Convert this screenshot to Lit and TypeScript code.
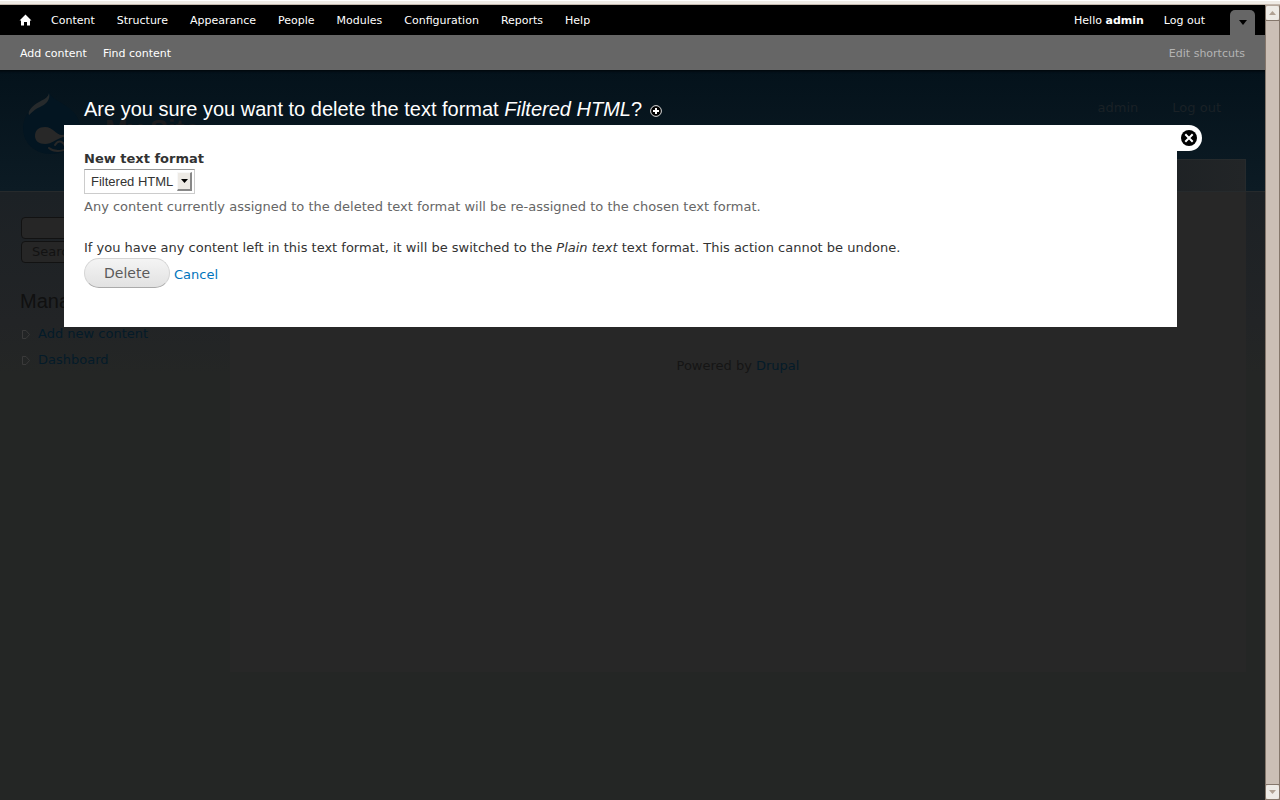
import { LitElement, html, css, svg } from "lit";
import { customElement } from "lit/decorators.js";

const MENU = ["Content", "Structure", "Appearance", "People", "Modules", "Configuration", "Reports", "Help"];

@customElement("admin-toolbar")
class AdminToolbar extends LitElement {
  static styles = css`
    :host { display: block; font: 11px/20px "DejaVu Sans", sans-serif; }
    a { color: #fff; text-decoration: none; }
    .bar { display: flex; height: 30px; box-sizing: border-box; background: #000; align-items: center; padding: 2px 0 0 19px; color: #fff; }
    .menu { display: flex; gap: 22px; align-items: center; flex: 1; }
    .home { display: flex; margin-right: -3px; padding-bottom: 2px; }
    .user { display: flex; gap: 20px; margin-right: 25px; }
    .toggle {
      align-self: flex-end; width: 25px; height: 25px; margin-right: 10px; padding: 0; border: 0;
      border-radius: 5px 5px 0 0; background: #666; display: flex; align-items: center; justify-content: center;
    }
    .shortcuts {
      display: flex; height: 35px; box-sizing: border-box; background: #666; align-items: center;
      padding: 2px 20px 0; gap: 16px;
    }
    .edit { margin-left: auto; color: #b4b4b4; }
  `;
  render() {
    return html`
      <div class="bar">
        <nav class="menu" aria-label="Administration">
          <a class="home" href="#" aria-label="Home"><svg width="13" height="12" viewBox="0 0 13 12"><path fill="#fff" d="M6.5 .5 12.5 6.5H11V11.5H8V8H5V11.5H2V6.5H.5Z"/></svg></a>
          ${MENU.map((m) => html`<a href="#">${m}</a>`)}
        </nav>
        <div class="user"><a href="#">Hello <b>admin</b></a><a href="#">Log out</a></div>
        <button class="toggle" aria-label="Toggle shortcuts"><svg width="8" height="5"><path d="M0 0H8L4 5Z"/></svg></button>
      </div>
      <div class="shortcuts">
        <a href="#">Add content</a><a href="#">Find content</a>
        <a class="edit" href="#">Edit shortcuts</a>
      </div>`;
  }
}

@customElement("site-page")
class SitePage extends LitElement {
  static styles = css`
    :host { display: block; font: 13px/20px "DejaVu Sans", sans-serif; color: #151515; }
    a { color: #041b29; text-decoration: none; }
    .header {
      height: 121px; background: linear-gradient(#04121b, #0c1b24); display: grid;
      grid-template-columns: 1fr auto; grid-template-rows: 89px 32px; box-shadow: inset 0 4px 3px -3px #010508;
    }
    .brand { display: flex; padding: 21px 0 0 22px; gap: 24px; }
    .name { font: bold 27px/30px "Liberation Sans", sans-serif; color: #1b1c1f; padding-top: 24px; }
    .account { display: flex; gap: 34px; padding: 28px 44px 0 0; }
    .account a { color: #1a2126; }
    .tab {
      grid-column: 1 / 3; margin: 0 19px 0 230px; border: 1px solid #262a2c; border-bottom: 0;
      background: linear-gradient(90deg, #1d2124 90%, #222527); box-sizing: border-box;
    }
    .body {
      display: grid; grid-template-columns: 230px 1fr 19px; min-height: 481px;
      border-top: 1px solid #262a2c; box-sizing: border-box;
      background: linear-gradient(#1c2125, #222426 130px, #242625 180px);
    }
    .side { padding: 25px 20px 0; }
    .search { display: flex; flex-direction: column; align-items: flex-start; gap: 2px; padding-left: 1px; }
    .search input, .search button {
      box-sizing: border-box; height: 22px; border: 1px solid #121212; border-radius: 4px;
      background: #262626; color: #121212; font: 13px/18px "DejaVu Sans", sans-serif;
    }
    .search input { width: 150px; }
    .search button { padding: 0 10px; }
    h2 { font: 20px/24px "Liberation Sans", sans-serif; margin: 26px 0 11px; color: #101010; }
    ul { list-style: none; margin: 0; padding: 0; }
    li { display: flex; align-items: center; gap: 8px; margin-bottom: 6px; padding-left: 2px; }
    .main { background: #272727; text-align: center; padding-top: 164px; }
  `;
  render() {
    const arrow = () => svg`<svg width="8" height="9"><path d="M.5 .5H4L7.5 4.5 4 8.5H.5Z" fill="none" stroke="#3a3a3a"/></svg>`;
    return html`
      <div class="header">
        <div class="brand">
          <svg width="59" height="65" viewBox="0 0 59 65">
            <path fill="#031521" d="M27 0C28 8 40 11 47 17C54 23 58 29 58 37C58 53 45 63 29 63C12 63 1 51 1 37C1 28 6 20 13 15C20 10 26 7 27 0Z"/>
            <path fill="#262a2c" d="M27 2C29 9 23 14 18 16C12 18 9 23 7 24C5 20 11 14 17 11C22 8 26 7 27 2Z"/>
            <path fill="#282828" d="M23 36C31 36 34 44 40 44C46 44 49 39 54 42V52C49 56 46 47 41 46C34 48 30 53 23 53C17 53 13 50 13 45C13 39 17 36 23 36Z"/>
            <path fill="none" stroke="#282828" stroke-width="2" stroke-linecap="round" d="M33 54C37 47 42 52 43 55M27 57C33 62 43 60 48 56"/>
          </svg>
          <div class="name">My Site</div>
        </div>
        <div class="account"><a href="#">admin</a><a href="#">Log out</a></div>
        <div class="tab"></div>
      </div>
      <div class="body">
        <div class="side">
          <form class="search"><input type="text" aria-label="Search" /><button type="button">Search</button></form>
          <h2>Management</h2>
          <ul>
            <li>${arrow()}<a href="#">Add new content</a></li>
            <li>${arrow()}<a href="#">Dashboard</a></li>
          </ul>
        </div>
        <div class="main">Powered by <a href="#">Drupal</a></div>
      </div>`;
  }
}

@customElement("delete-overlay")
class DeleteOverlay extends LitElement {
  static styles = css`
    :host { display: block; font: 13px/20px "DejaVu Sans", sans-serif; color: #333; }
    .title { display: flex; align-items: center; gap: 8px; padding: 0 20px 2px; height: 28px; }
    h1 { font: 20px/24px "Liberation Sans", sans-serif; color: #fff; margin: 0; }
    .add { display: flex; padding-top: 4px; }
    .panel { position: relative; background: #fff; padding: 24px 20px 39px; }
    .close {
      position: absolute; left: 100%; top: 0; width: 25px; height: 26px; padding: 0 0 0 3px; border: 0;
      border-radius: 0 13px 13px 0; background: #fff; display: flex; align-items: center;
    }
    .label { display: block; font-weight: bold; }
    .pick { display: inline-grid; grid-template-columns: auto; align-items: center; }
    select {
      grid-area: 1 / 1; appearance: none; width: 111px; height: 25px; box-sizing: border-box; padding: 0 18px 0 6px;
      border: 1px solid #ccc; border-top-color: #999; border-radius: 0; background: #fff; color: #333;
      font: 13px/20px "Liberation Sans", sans-serif;
    }
    .drop {
      grid-area: 1 / 1; justify-self: end; margin-right: 3px; width: 15px; height: 19px; box-sizing: border-box;
      background: #edeae5; border: solid; border-width: 1px 2px 2px 1px; border-color: #f8f8f8 #888 #888 #f8f8f8;
      display: flex; align-items: center; justify-content: center; pointer-events: none;
    }
    .hint { color: #666; margin: 3px 0 21px; }
    .note { margin: 0; }
    .actions { display: flex; align-items: center; gap: 4px; }
    .delete {
      height: 30px; box-sizing: border-box; padding: 0 19px; border: 1px solid #d5d5d5; border-bottom-color: #aaa;
      border-radius: 15px; background: linear-gradient(#f4f4f4, #e2e2e2); color: #5a5a5a;
      font: 14px/20px "DejaVu Sans", sans-serif;
    }
    .actions a { color: #0074bd; text-decoration: none; padding-top: 3px; }
  `;
  render() {
    return html`
      <div class="title">
        <h1>Are you sure you want to delete the text format <em>Filtered HTML</em>?</h1>
        <a class="add" href="#" aria-label="Add to shortcuts"><svg width="12" height="12"><circle cx="6" cy="6" r="5.4" fill="#000" stroke="#ddd"/><path stroke="#fff" stroke-width="2" d="M6 3V9M3 6H9"/></svg></a>
      </div>
      <div class="panel">
        <button class="close" aria-label="Close overlay"><svg width="18" height="18"><circle cx="9" cy="9" r="8"/><path stroke="#fff" stroke-width="2" d="M5.3 5.3 12.7 12.7M12.7 5.3 5.3 12.7"/></svg></button>
        <label class="label" for="format">New text format</label>
        <div class="pick">
          <select id="format"><option>Filtered HTML</option></select>
          <span class="drop"><svg width="7" height="4"><path d="M0 0H7L3.5 4Z"/></svg></span>
        </div>
        <p class="hint">Any content currently assigned to the deleted text format will be re-assigned to the chosen text format.</p>
        <p class="note">If you have any content left in this text format, it will be switched to the <em>Plain text</em> text format. This action cannot be undone.</p>
        <div class="actions"><button class="delete">Delete</button><a href="#">Cancel</a></div>
      </div>`;
  }
}

@customElement("app-root")
class AppRoot extends LitElement {
  static styles = css`
    :host { display: flex; flex-direction: column; min-height: 100vh; background: #242625; }
    .edge { height: 5px; box-sizing: border-box; background: #efebe5; border-top: 1px solid #fff; border-bottom: 1px solid #c4b8ad; }
    .window { flex: 1; display: flex; }
    .view { flex: 1; min-width: 0; }
    .stage { position: relative; }
    .overlay { position: absolute; top: 25px; left: 64px; right: 88px; }
    .scroll {
      width: 15px; box-sizing: border-box; display: flex; flex-direction: column;
      background: #cbbfb5; border: 1px solid #85776b; border-top-color: #b5a89c;
    }
    .step { height: 14px; background: #eeebe6; display: flex; align-items: center; justify-content: center; border-radius: 2px; }
    .thumb { flex: 1; border: solid #85776b; border-width: 1px 0; }
  `;
  render() {
    return html`
      <div class="edge"></div>
      <div class="window">
        <div class="view">
          <admin-toolbar></admin-toolbar>
          <div class="stage">
            <site-page></site-page>
            <delete-overlay class="overlay"></delete-overlay>
          </div>
        </div>
        <div class="scroll" aria-hidden="true">
          <div class="step"><svg width="7" height="4"><path fill="#b0a193" d="M0 4H7L3.5 0Z"/></svg></div>
          <div class="thumb"></div>
          <div class="step"><svg width="7" height="4"><path fill="#b0a193" d="M0 0H7L3.5 4Z"/></svg></div>
        </div>
      </div>`;
  }
}
